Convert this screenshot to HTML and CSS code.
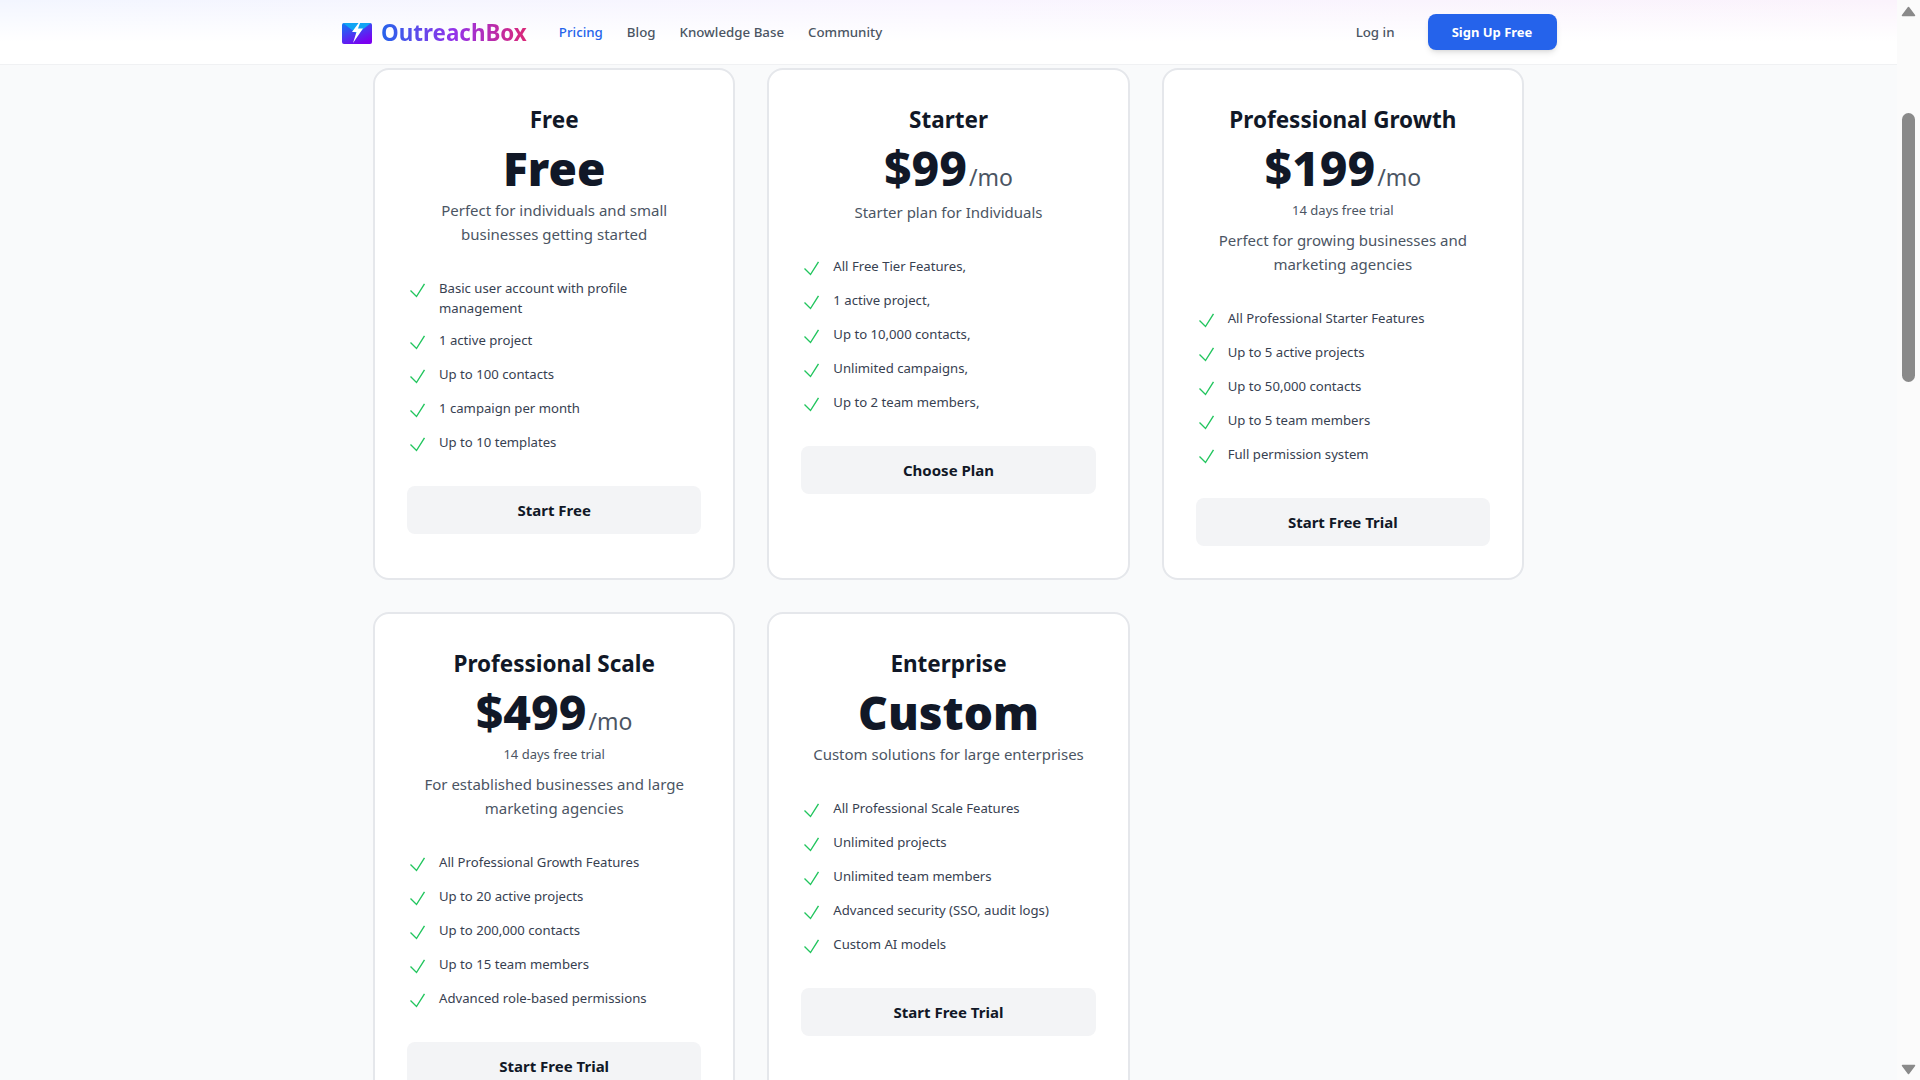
FILE: index.html
```html
<!DOCTYPE html>
<html lang="en">
<head>
    <meta charset="UTF-8">
    <title>Pricing - OutreachBox</title>
    <link rel="stylesheet" href="styles.css">
</head>
<body>
    <svg class="defs" width="0" height="0">
        <defs>
            <symbol id="check" viewBox="0 0 20 20">
                <path d="M3.5 10.5l6 6 8-12.700" fill="none" stroke="currentColor" stroke-width="1.4"/>
            </symbol>
            <linearGradient id="env" x1="0" y1="0" x2="0.6" y2="1">
                <stop offset="0" stop-color="#0f7cf5"/>
                <stop offset="1" stop-color="#7a00f0"/>
            </linearGradient>
        </defs>
    </svg>
    <div class="page">
        <header class="topbar">
            <div class="topbar-inner">
                <a class="logo">
                    <svg class="logo-icon" width="30" height="25" viewBox="0 0 30 25">
                        <rect x="0" y="4" width="30" height="21" rx="2" fill="url(#env)"/>
                        <path d="M1 4h28L15 15z" fill="#10a4f4"/>
                        <path d="M19.500 0L10 13h4.500L11 24l10-14.500h-5z" fill="#fff"/>
                    </svg>
                    <span class="logo-text">OutreachBox</span>
                </a>
                <nav class="nav">
                    <a class="active">Pricing</a>
                    <a>Blog</a>
                    <a>Knowledge Base</a>
                    <a>Community</a>
                </nav>
                <a class="login">Log in</a>
                <a class="signup">Sign Up Free</a>
            </div>
        </header>

        <main class="plans">
            <section class="card">
                <h3>Free</h3>
                <div class="price word">Free</div>
                <p class="desc">Perfect for individuals and small businesses getting started</p>
                <ul class="features">
                    <li><svg><use href="#check"/></svg><span>Basic user account with profile management</span></li>
                    <li><svg><use href="#check"/></svg><span>1 active project</span></li>
                    <li><svg><use href="#check"/></svg><span>Up to 100 contacts</span></li>
                    <li><svg><use href="#check"/></svg><span>1 campaign per month</span></li>
                    <li><svg><use href="#check"/></svg><span>Up to 10 templates</span></li>
                </ul>
                <button>Start Free</button>
            </section>

            <section class="card">
                <h3>Starter</h3>
                <div class="price paid">$99<small>/mo</small></div>
                <p class="desc">Starter plan for Individuals</p>
                <ul class="features">
                    <li><svg><use href="#check"/></svg><span>All Free Tier Features,</span></li>
                    <li><svg><use href="#check"/></svg><span>1 active project,</span></li>
                    <li><svg><use href="#check"/></svg><span>Up to 10,000 contacts,</span></li>
                    <li><svg><use href="#check"/></svg><span>Unlimited campaigns,</span></li>
                    <li><svg><use href="#check"/></svg><span>Up to 2 team members,</span></li>
                </ul>
                <button>Choose Plan</button>
            </section>

            <section class="card">
                <h3>Professional Growth</h3>
                <div class="price paid">$199<small>/mo</small></div>
                <div class="trial">14 days free trial</div>
                <p class="desc">Perfect for growing businesses and marketing agencies</p>
                <ul class="features">
                    <li><svg><use href="#check"/></svg><span>All Professional Starter Features</span></li>
                    <li><svg><use href="#check"/></svg><span>Up to 5 active projects</span></li>
                    <li><svg><use href="#check"/></svg><span>Up to 50,000 contacts</span></li>
                    <li><svg><use href="#check"/></svg><span>Up to 5 team members</span></li>
                    <li><svg><use href="#check"/></svg><span>Full permission system</span></li>
                </ul>
                <button>Start Free Trial</button>
            </section>

            <section class="card">
                <h3>Professional Scale</h3>
                <div class="price paid">$499<small>/mo</small></div>
                <div class="trial">14 days free trial</div>
                <p class="desc">For established businesses and large marketing agencies</p>
                <ul class="features">
                    <li><svg><use href="#check"/></svg><span>All Professional Growth Features</span></li>
                    <li><svg><use href="#check"/></svg><span>Up to 20 active projects</span></li>
                    <li><svg><use href="#check"/></svg><span>Up to 200,000 contacts</span></li>
                    <li><svg><use href="#check"/></svg><span>Up to 15 team members</span></li>
                    <li><svg><use href="#check"/></svg><span>Advanced role-based permissions</span></li>
                </ul>
                <button>Start Free Trial</button>
            </section>

            <section class="card">
                <h3>Enterprise</h3>
                <div class="price word">Custom</div>
                <p class="desc">Custom solutions for large enterprises</p>
                <ul class="features">
                    <li><svg><use href="#check"/></svg><span>All Professional Scale Features</span></li>
                    <li><svg><use href="#check"/></svg><span>Unlimited projects</span></li>
                    <li><svg><use href="#check"/></svg><span>Unlimited team members</span></li>
                    <li><svg><use href="#check"/></svg><span>Advanced security (SSO, audit logs)</span></li>
                    <li><svg><use href="#check"/></svg><span>Custom AI models</span></li>
                </ul>
                <button>Start Free Trial</button>
            </section>
        </main>
    </div>

    <div class="scrollbar">
        <svg class="arrow up" viewBox="0 0 15 11"><path d="M7.500 1.500L13.500 9.500H1.500z"/></svg>
        <div class="track"><div class="thumb"></div></div>
        <svg class="arrow down" viewBox="0 0 15 11"><path d="M1.500 1.500H13.500L7.500 9.500z"/></svg>
    </div>
</body>
</html>
```

FILE: styles.css
```css
* { box-sizing: border-box; }
html, body { height: 100%; margin: 0; overflow: hidden; }
body { display: flex; font-family: "Noto Sans", "Open Sans", Arial, sans-serif; background: #f9fafb; color: #111827; }
.defs { position: absolute; }

.page { flex: 1; min-width: 0; height: 1080px; overflow: hidden; }

.topbar { height: 65px; background: linear-gradient(to bottom, rgba(255,255,255,0) 0%, #ffffff 65%), linear-gradient(to right, #f3f6ff, #f9f5ff, #fbf3fc); border-bottom: 1px solid #f0f1f3; }
.topbar-inner { max-width: 1280px; height: 64px; margin: 0 auto; padding: 0 32px; display: flex; align-items: center; }
.logo { display: flex; align-items: center; gap: 9px; margin: 0 32px 0 1.500px; }
.logo-icon { display: block; margin-top: -2px; }
.logo-text { font-size: 22.400px; line-height: 34px; padding-top: 1px; font-weight: 700; background: linear-gradient(to right, #2563eb, #9333ea, #db2777); -webkit-background-clip: text; background-clip: text; color: transparent; }
.nav { display: flex; gap: 24px; font-size: 13.300px; font-weight: 500; color: #4b5563; flex: 1; }
.nav .active { color: #2563eb; }
.login { font-size: 13.300px; font-weight: 500; color: #4b5563; margin-right: 33px; }
.signup { width: 129px; height: 36px; border-radius: 8px; background: #2563eb; color: #fff; font-size: 13px; font-weight: 700; display: flex; align-items: center; justify-content: center; box-shadow: 0 4px 6px -1px rgba(0,0,0,.1), 0 2px 4px -2px rgba(0,0,0,.1); }

.plans { width: 1151px; margin: 3px auto 0; display: grid; grid-template-columns: repeat(3, 1fr); gap: 32px; align-items: stretch; }
.card { background: #fff; border: 2px solid #e5e7eb; border-radius: 16px; padding: 32px; text-align: center; }
.card h3 { height: 32px; margin: 0 0 8px; font-size: 22.500px; line-height: 36px; font-weight: 700; color: #111827; }
.price { height: 48px; font-size: 48px; line-height: 52px; font-weight: 800; color: #111827; margin-bottom: 8px; }
.price.word { font-size: 46px; font-weight: 900; }
.price.paid { height: 50px; }
.price small { font-size: 23px; font-weight: 400; color: #4b5563; margin-left: 2px; }
.trial { font-size: 13px; line-height: 20px; color: #4b5563; margin-bottom: 8px; }
.desc { margin: 0 0 32px; font-size: 15px; line-height: 24px; color: #4b5563; }
.features { list-style: none; margin: 0 0 32px; padding: 0; text-align: left; display: flex; flex-direction: column; gap: 12px; }
.features li { display: flex; gap: 12px; font-size: 13.150px; line-height: 20px; color: #374151; }
.features svg { flex: none; width: 20px; height: 20px; margin-top: 2px; color: #22c55e; }
.card button { display: block; width: 100%; height: 48px; border: 0; border-radius: 8px; background: #f3f4f6; color: #111827; font-family: inherit; font-size: 15px; font-weight: 700; cursor: pointer; }

.scrollbar { flex: none; width: 23px; height: 1080px; background: #fbfbfb; display: flex; flex-direction: column; align-items: center; }
.arrow { flex: none; width: 15px; height: 11px; fill: #8a8a8a; stroke: #8a8a8a; stroke-width: 1.500; stroke-linejoin: round; }
.arrow.up { margin-top: 6px; }
.arrow.down { margin-bottom: 5px; }
.track { flex: 1; width: 100%; }
.thumb { width: 13px; height: 269px; margin: 96px auto 0; border-radius: 7px; background: #8a8a8a; }
```
